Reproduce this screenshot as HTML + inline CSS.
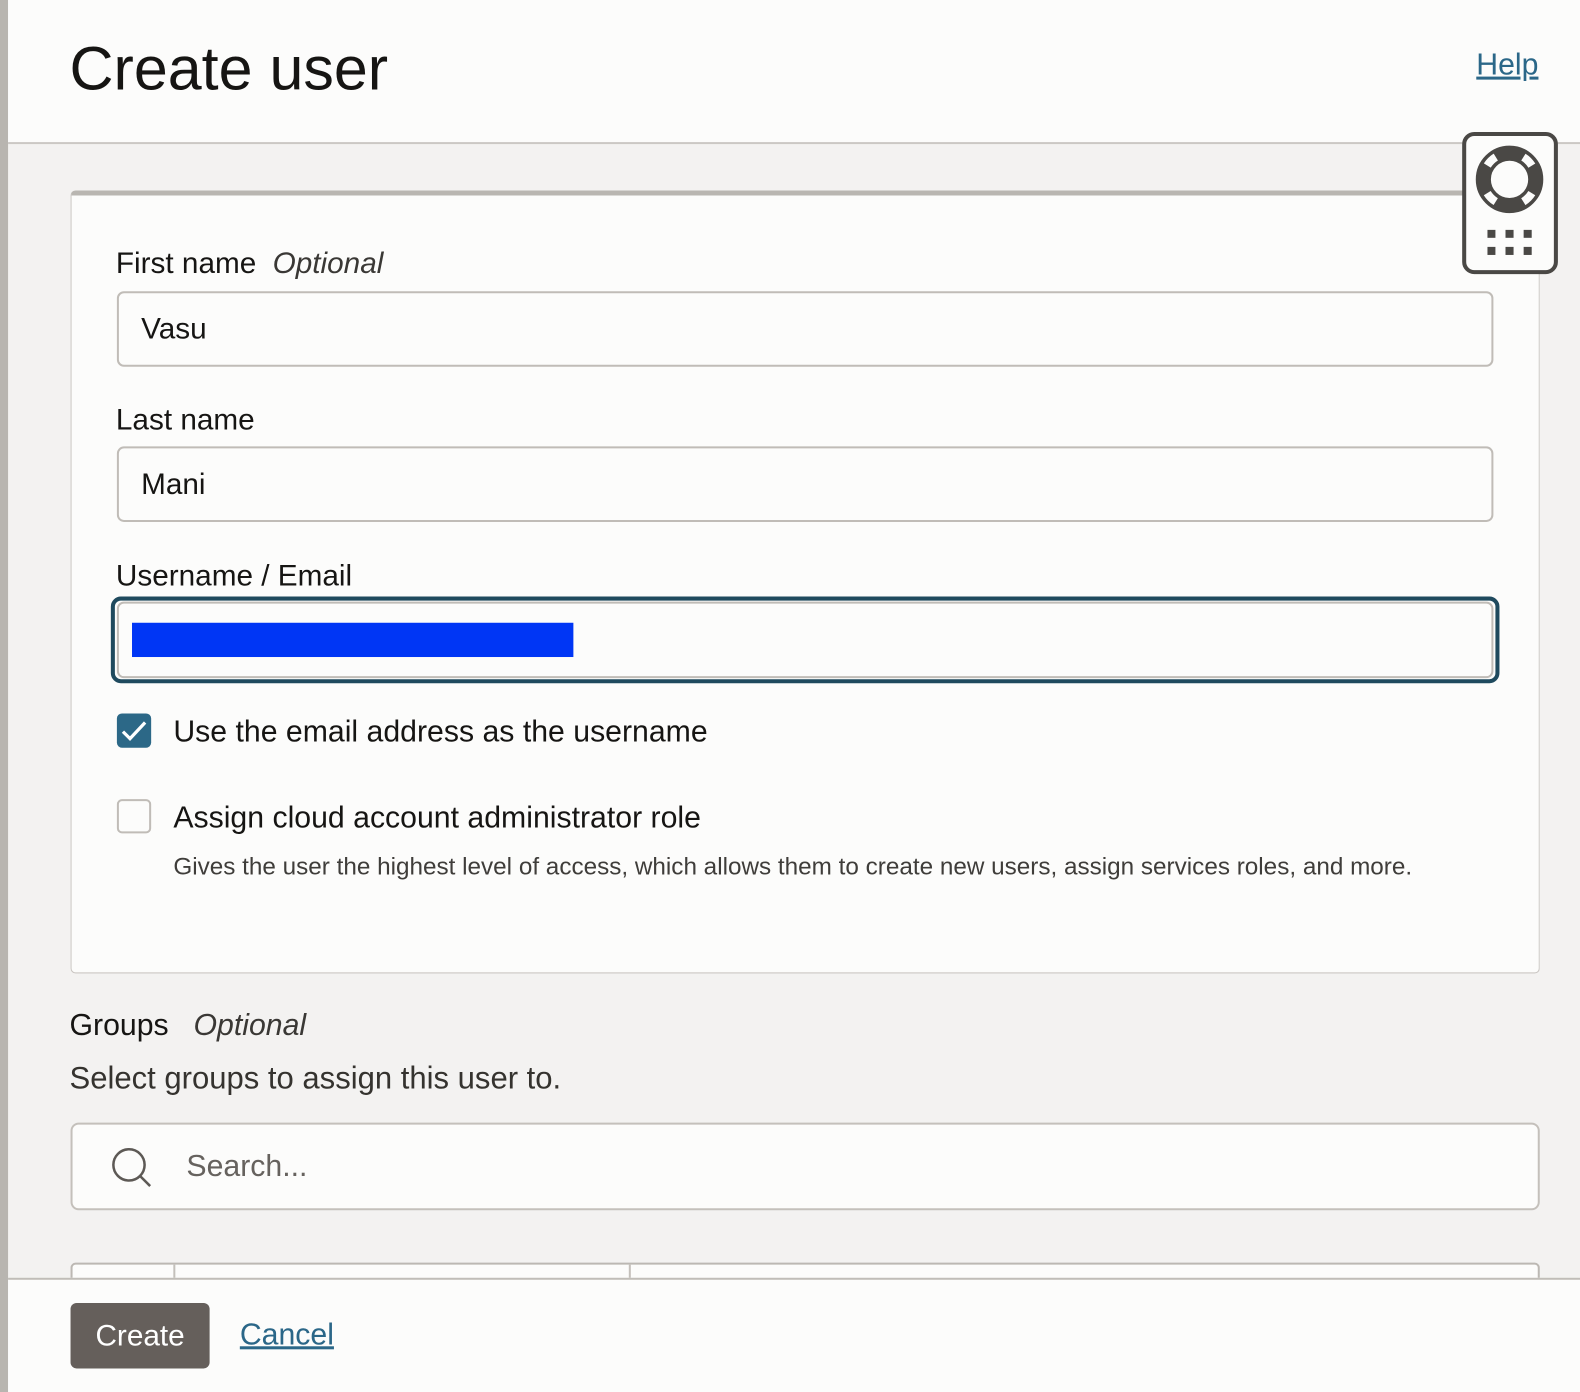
<!DOCTYPE html>
<html><head><meta charset="utf-8"><style>
*{box-sizing:border-box;margin:0;padding:0}
html,body{width:1580px;height:1392px;overflow:hidden;background:#f3f2f1}
body{font-family:"Liberation Sans",Arial,sans-serif;color:#161513;position:relative}
#w{position:absolute;left:0;top:0;width:1568px;height:1392px;transform:scale(1.0077);transform-origin:0 0}
.abs{position:absolute}
.strip{left:0;top:0;width:8px;height:1392px;background:#b8b5b0}
.header{left:8px;top:0;width:1572px;height:143px;background:#fcfcfb;border-bottom:2px solid #cbc8c4}
.title{left:69px;top:33px;font-size:60.5px;line-height:70px}
.help{left:1465px;top:48px;font-size:30px;color:#2b6788;text-decoration:underline}
.card{left:70px;top:189px;width:1458px;height:777px;background:#fcfcfb;border:1px solid #c8c4c0;border-top:5px solid #b9b6b1;border-radius:5px}
.lbl{font-size:29.5px;left:115px}
.opt{font-style:italic;color:#3a3835;margin-left:8px}
.inp{left:116px;width:1366px;height:75px;border:2px solid #c0bcb7;border-radius:7px;background:#fcfcfb;font-size:29.5px;padding-left:22px;line-height:71px}
.cb{width:34px;height:34px;border-radius:5px;left:116px}
.txt{font-size:30px;left:172px}
.footer{left:8px;top:1268px;width:1572px;height:140px;background:#fcfcfb;border-top:2px solid #c0bdb8}
.btn{left:70px;top:1293px;width:138px;height:65px;background:#655f5b;border-radius:6px;color:#fff;font-size:29.5px;text-align:center;line-height:65px}
.cancel{left:238px;top:1308px;font-size:30px;color:#2b6788;text-decoration:underline}
</style></head><body><div id="w">
<div class="abs strip"></div>
<div class="abs header"></div>
<div class="abs title">Create user</div>
<div class="abs help">Help</div>
<div class="abs card"></div>
<div class="abs lbl" style="top:245px">First name<span class="opt">&nbsp;Optional</span></div>
<div class="abs inp" style="top:289px">Vasu</div>
<div class="abs lbl" style="top:400px">Last name</div>
<div class="abs inp" style="top:443px">Mani</div>
<div class="abs lbl" style="top:555px">Username / Email</div>
<div class="abs" style="left:110px;top:592px;width:1378px;height:86px;border:4px solid #1f4a5e;border-radius:10px"></div>
<div class="abs inp" style="top:597px;height:76px"></div>
<div class="abs" style="left:131px;top:618px;width:438px;height:34px;background:#0036f5"></div>
<div class="abs cb" style="top:708px;background:#2c6887"><svg width="34" height="34" viewBox="0 0 34 34"><path d="M6 18 L13 25 L28 9" fill="none" stroke="#fff" stroke-width="3.2"/></svg></div>
<div class="abs txt" style="top:710px">Use the email address as the username</div>
<div class="abs cb" style="top:793px;border:2px solid #c0bcb7;background:#fcfcfb"></div>
<div class="abs txt" style="top:795px">Assign cloud account administrator role</div>
<div class="abs" style="left:172px;top:847px;font-size:24.1px;color:#3f3d3a">Gives the user the highest level of access, which allows them to create new users, assign services roles, and more.</div>
<div class="abs" style="left:69px;top:1001px;font-size:30px">Groups<span class="opt">&nbsp;&nbsp;Optional</span></div>
<div class="abs" style="left:69px;top:1052px;font-size:30.8px;color:#35332f">Select groups to assign this user to.</div>
<div class="abs" style="left:70px;top:1114px;width:1458px;height:87px;background:#fcfcfb;border:2px solid #c4c0bb;border-radius:8px"></div>
<svg class="abs" style="left:110px;top:1138px" width="42" height="42" viewBox="0 0 42 42"><circle cx="18" cy="18" r="15.5" fill="none" stroke="#5d5955" stroke-width="2.5"/><path d="M29 29 L39 39" stroke="#5d5955" stroke-width="2.5"/></svg>
<div class="abs" style="left:185px;top:1141px;font-size:30px;color:#66625e">Search...</div>
<div class="abs" style="left:70px;top:1253px;width:1458px;height:30px;background:#fcfcfb;border:2px solid #bcb8b3;border-radius:5px"></div>
<div class="abs" style="left:172px;top:1255px;width:2px;height:14px;background:#c4c0bb"></div>
<div class="abs" style="left:624px;top:1255px;width:2px;height:14px;background:#c4c0bb"></div>
<div class="abs footer"></div>
<div class="abs btn">Create</div>
<div class="abs cancel">Cancel</div>
<div class="abs" style="left:1451px;top:131px;width:95px;height:141px;background:#fcfcfb;border:4px solid #4a4845;border-radius:12px"></div>
<svg class="abs" style="left:1464px;top:144px" width="68" height="68" viewBox="0 0 68 68"><circle cx="34" cy="34" r="26" fill="none" stroke="#4a4845" stroke-width="14"/><circle cx="34" cy="34" r="26" fill="none" stroke="#fcfcfb" stroke-width="8" stroke-dasharray="12 28.8" stroke-dashoffset="-14.4"/><circle cx="34" cy="34" r="32.5" fill="none" stroke="#4a4845" stroke-width="2"/><circle cx="34" cy="34" r="19.5" fill="none" stroke="#4a4845" stroke-width="2"/></svg>
<svg class="abs" style="left:1476px;top:228px" width="46" height="26" viewBox="0 0 46 26"><g fill="#4a4845"><rect x="0" y="0" width="8" height="8"/><rect x="18" y="0" width="8" height="8"/><rect x="36" y="0" width="8" height="8"/><rect x="0" y="17" width="8" height="8"/><rect x="18" y="17" width="8" height="8"/><rect x="36" y="17" width="8" height="8"/></g></svg>
</div></body></html>
